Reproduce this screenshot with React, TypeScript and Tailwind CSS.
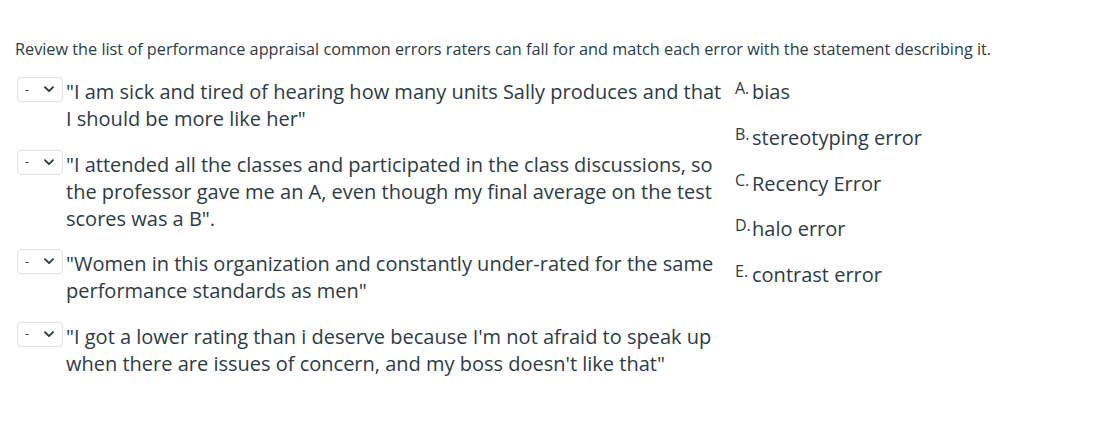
import React from 'react';

const statements: string[] = [
  '"I am sick and tired of hearing how many units Sally produces and that I should be more like her"',
  '"I attended all the classes and participated in the class discussions, so the professor gave me an A, even though my final average on the test scores was a B".',
  '"Women in this organization and constantly under-rated for the same performance standards as men"',
  '"I got a lower rating than i deserve because I\'m not afraid to speak up when there are issues of concern, and my boss doesn\'t like that"',
];

const answers: { letter: string; text: string }[] = [
  { letter: 'A.', text: 'bias' },
  { letter: 'B.', text: 'stereotyping error' },
  { letter: 'C.', text: 'Recency Error' },
  { letter: 'D.', text: 'halo error' },
  { letter: 'E.', text: 'contrast error' },
];

const FakeSelect: React.FC = () => (
  <div className="mt-[-1px] flex h-[25px] w-[46px] shrink-0 items-center justify-between rounded-[4px] border border-[#e2e2e2] bg-white pl-[7px] pr-[8px] text-[12px] text-[#2d3b45]">
    <span>-</span>
    <svg width="10" height="7" viewBox="0 0 10 7" fill="none">
      <path d="M1 1.2 L5 5.2 L9 1.2" stroke="#2d3b45" strokeWidth="1.9" strokeLinecap="round" strokeLinejoin="round" />
    </svg>
  </div>
);

const App: React.FC = () => {
  return (
    <div className="h-[432px] w-[1107px] bg-white text-[#2d3b45]" style={{ fontFamily: '"Open Sans", "Liberation Sans", sans-serif' }}>
      <div className="px-[15px] pt-[38px]">
        <p className="text-[16.25px] leading-[22px]">
          Review the list of performance appraisal common errors raters can fall for and match each error with the statement describing it.
        </p>

        <div className="mt-[18px] flex">
          <div className="flex w-[712px] flex-col gap-[18.5px] pl-[2px]">
            {statements.map((s, i) => (
              <div key={i} className="flex gap-[3px]">
                <FakeSelect />
                <p className="w-[660px] text-[20px] leading-[27px]">{s}</p>
              </div>
            ))}
          </div>

          <div className="ml-[8px] flex flex-col gap-[18.75px]">
            {answers.map((a) => (
              <div key={a.letter} className="flex items-start leading-[27px]">
                <span className="mt-[-3px] w-[17px] text-[16px]">{a.letter}</span>
                <span className="text-[20px]">{a.text}</span>
              </div>
            ))}
          </div>
        </div>
      </div>
    </div>
  );
};

export default App;
